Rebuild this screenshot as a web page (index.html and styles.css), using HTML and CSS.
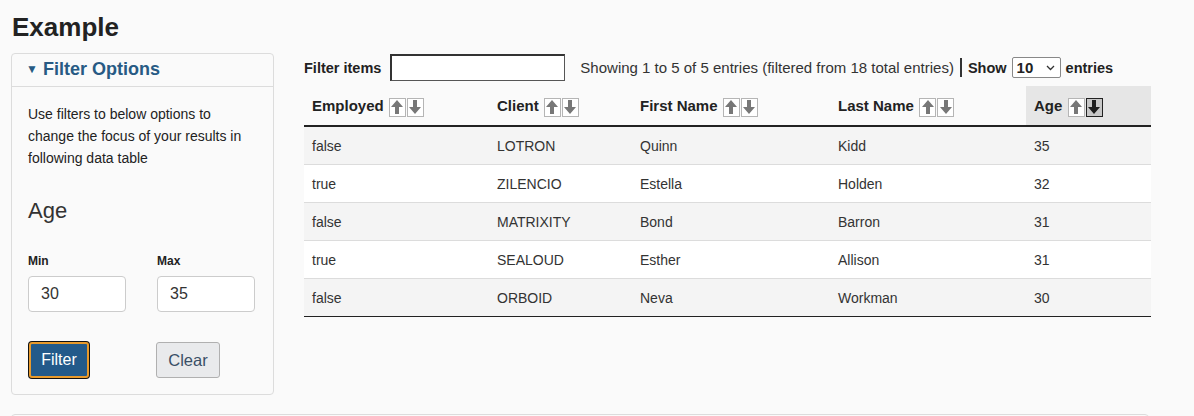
FILE: index.html
```html
<!DOCTYPE html>
<html>
<head>
<meta charset="utf-8">
<link rel="stylesheet" href="styles.css">
</head>
<body>
<h1 class="title">Example</h1>
<div class="layout">
  <aside class="panel">
    <div class="panel-head"><span class="caret">▼</span> Filter Options</div>
    <div class="panel-body">
      <p class="intro">Use filters to below options to change the focus of your results in following data table</p>
      <h2 class="group">Age</h2>
      <div class="range">
        <div class="field"><label>Min</label><input class="num" type="text" value="30"></div>
        <div class="field"><label>Max</label><input class="num" type="text" value="35"></div>
      </div>
      <div class="actions">
        <button class="btn primary">Filter</button>
        <button class="btn secondary">Clear</button>
      </div>
    </div>
  </aside>
  <main class="content">
    <div class="toolbar">
      <label class="tb-label">Filter items</label>
      <input class="search" type="text">
      <span class="info">Showing 1 to 5 of 5 entries (filtered from 18 total entries)</span>
      <span class="sep"></span>
      <b class="tb-label">Show</b>
      <span class="select">10 <svg width="9" height="6" viewBox="0 0 9 6"><path d="M1 1 L4.5 4.5 L8 1" fill="none" stroke="#333" stroke-width="1.3"/></svg></span>
      <b class="tb-label">entries</b>
    </div>
    <table class="grid">
      <colgroup>
        <col style="width:185px"><col style="width:143px"><col style="width:198px"><col style="width:196px"><col style="width:125px">
      </colgroup>
      <thead>
        <tr>
          <th>Employed <span class="sorts"><span class="s"><svg viewBox="0 0 14 16"><path d="M7 1 L13 8 L9 8 L9 15 L5 15 L5 8 L1 8 Z"/></svg></span><span class="s"><svg viewBox="0 0 14 16"><path d="M7 15 L13 8 L9 8 L9 1 L5 1 L5 8 L1 8 Z"/></svg></span></span></th>
          <th>Client <span class="sorts"><span class="s"><svg viewBox="0 0 14 16"><path d="M7 1 L13 8 L9 8 L9 15 L5 15 L5 8 L1 8 Z"/></svg></span><span class="s"><svg viewBox="0 0 14 16"><path d="M7 15 L13 8 L9 8 L9 1 L5 1 L5 8 L1 8 Z"/></svg></span></span></th>
          <th>First Name <span class="sorts"><span class="s"><svg viewBox="0 0 14 16"><path d="M7 1 L13 8 L9 8 L9 15 L5 15 L5 8 L1 8 Z"/></svg></span><span class="s"><svg viewBox="0 0 14 16"><path d="M7 15 L13 8 L9 8 L9 1 L5 1 L5 8 L1 8 Z"/></svg></span></span></th>
          <th>Last Name <span class="sorts"><span class="s"><svg viewBox="0 0 14 16"><path d="M7 1 L13 8 L9 8 L9 15 L5 15 L5 8 L1 8 Z"/></svg></span><span class="s"><svg viewBox="0 0 14 16"><path d="M7 15 L13 8 L9 8 L9 1 L5 1 L5 8 L1 8 Z"/></svg></span></span></th>
          <th class="sorted">Age <span class="sorts"><span class="s"><svg viewBox="0 0 14 16"><path d="M7 1 L13 8 L9 8 L9 15 L5 15 L5 8 L1 8 Z"/></svg></span><span class="s active"><svg viewBox="0 0 14 16"><path d="M7 15 L13 8 L9 8 L9 1 L5 1 L5 8 L1 8 Z"/></svg></span></span></th>
        </tr>
      </thead>
      <tbody>
        <tr><td>false</td><td>LOTRON</td><td>Quinn</td><td>Kidd</td><td>35</td></tr>
        <tr><td>true</td><td>ZILENCIO</td><td>Estella</td><td>Holden</td><td>32</td></tr>
        <tr><td>false</td><td>MATRIXITY</td><td>Bond</td><td>Barron</td><td>31</td></tr>
        <tr><td>true</td><td>SEALOUD</td><td>Esther</td><td>Allison</td><td>31</td></tr>
        <tr><td>false</td><td>ORBOID</td><td>Neva</td><td>Workman</td><td>30</td></tr>
      </tbody>
    </table>
  </main>
</div>
<div class="footer-panel"></div>
</body>
</html>
```
FILE: styles.css
```css
* { box-sizing: border-box; }
html, body { margin: 0; padding: 0; }
body {
  background: #fafafa;
  font-family: "Liberation Sans", Arial, sans-serif;
  color: #333;
  padding: 0 11px;
  overflow: hidden;
  height: 416px;
}
.title {
  margin: 0;
  padding-top: 13px;
  font-size: 26px;
  line-height: 28px;
  font-weight: bold;
  color: #222;
  padding-left: 1px;
  height: 53px;
}
.layout {
  display: flex;
  align-items: flex-start;
  gap: 30px;
}
.panel {
  width: 263px;
  height: 342px;
  border: 1px solid #dcdcdc;
  border-radius: 4px;
  background: #fafafa;
  flex-shrink: 0;
}
.panel-head {
  height: 33px;
  border-bottom: 1px solid #dcdcdc;
  padding: 5px 0 0 14px;
  font-size: 18px;
  font-weight: bold;
  color: #275a84;
}
.caret { font-size: 12px; position: relative; top: -2px; margin-right: 0; }
.panel-body { padding: 16px 16px 0 16px; }
.intro {
  margin: 0;
  font-size: 14px;
  line-height: 22px;
  color: #222;
}
.group {
  margin: 28px 0 0 0;
  font-size: 22px;
  font-weight: normal;
  color: #333;
  line-height: 28px;
}
.range { display: flex; gap: 30px; margin-top: 28px; }
.field { display: flex; flex-direction: column; width: 99px; }
.field label {
  font-size: 12px;
  font-weight: bold;
  color: #222;
  line-height: 16px;
  margin-bottom: 7px;
}
.num {
  width: 98px;
  height: 36px;
  border: 1px solid #ccc;
  border-radius: 4px;
  background: #fff;
  font-family: "Liberation Sans", Arial, sans-serif;
  font-size: 16px;
  color: #333;
  padding: 0 12px;
}
.actions { display: flex; gap: 67px; margin-top: 30px; padding-left: 1px; }
.btn {
  height: 36px;
  font-family: "Liberation Sans", Arial, sans-serif;
  font-size: 16px;
  border-radius: 3px;
  padding: 0;
}
.btn.primary {
  width: 60px;
  background: #235a8a;
  color: #fff;
  border: 2px solid #e89a2c;
  box-shadow: 0 0 0 1px #111;
}
.btn.secondary {
  width: 64px;
  background: #e9eaec;
  color: #3a4f66;
  border: 1px solid #b0b0b0;
  font-size: 16.5px;
}
.content { width: 847px; }
.toolbar {
  display: flex;
  align-items: center;
  height: 29px;
  margin-top: 0;
  margin-bottom: 4px;
  font-size: 15px;
  color: #333;
}
.tb-label { font-size: 14.5px; font-weight: bold; color: #222; }
.search {
  width: 175px;
  height: 27px;
  margin: 0 15px 0 9px;
  border: 1px solid #555;
  border-top: 2px solid #333;
  border-left: 2px solid #333;
  background: #fff;
}
.info { font-size: 15px; color: #333; }
.sep {
  width: 2px;
  height: 19px;
  background: #333;
  margin: 0 6px 0 6px;
}
.select {
  display: inline-flex;
  align-items: center;
  justify-content: space-between;
  width: 49px;
  height: 21px;
  margin: 0 5px 0 5px;
  border: 1px solid #888;
  border-radius: 2px;
  background: #fff;
  padding: 0 5px 0 4px;
  font-size: 15px;
  font-weight: bold;
  color: #222;
}
.grid {
  width: 847px;
  border-collapse: collapse;
  table-layout: fixed;
  font-size: 14px;
}
.grid th {
  height: 40px;
  text-align: left;
  padding: 3px 8px 0 8px;
  font-size: 15px;
  font-weight: bold;
  color: #222;
  border-bottom: 2px solid #222;
  white-space: nowrap;
}
.grid th.sorted { background: #e6e6e6; }
.sorts { display: inline-flex; vertical-align: -4px; margin-left: 1px; }
.s {
  display: inline-flex;
  align-items: center;
  justify-content: center;
  width: 17px;
  height: 19px;
  border: 1px solid #b5b5b5;
  background: #fff;
}
.s + .s { margin-left: 1px; }
.s svg { width: 14px; height: 16px; fill: #777; }
.s.active { background: #c8c8c8; border-color: #222; }
.s.active svg { fill: #1e1e1e; }
.grid td {
  height: 38px;
  padding: 1px 8px 0 8px;
  color: #333;
  border-top: 1px solid #dcdcdc;
}
.grid tbody tr:nth-child(odd) td { background: #f4f4f4; }
.grid tbody tr:nth-child(even) td { background: #fff; }
.grid tbody tr:first-child td { border-top: none; }
.grid tbody tr:last-child td { border-bottom: 1px solid #222; }
.footer-panel {
  margin-top: 19px;
  width: 1138px;
  height: 20px;
  border: 1px solid #dcdcdc;
  border-radius: 4px;
}
```
